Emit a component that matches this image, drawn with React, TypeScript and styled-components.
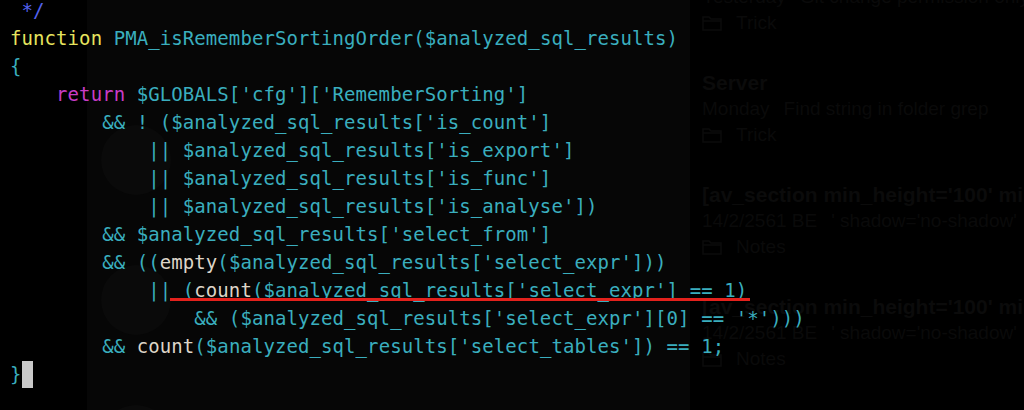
import React from "react";
import styled, { createGlobalStyle } from "styled-components";

const Global = createGlobalStyle`
  html, body { margin: 0; padding: 0; background: #000; }
  body { width: 1024px; height: 410px; overflow: hidden; }
`;

const Screen = styled.div`
  position: relative;
  width: 1024px;
  height: 410px;
  overflow: hidden;
  background: #000;
`;

/* faint page visible through the translucent terminal */
const Backdrop = styled.div`
  position: absolute;
  inset: 0;
  display: grid;
  grid-template-columns: 87px 603px 1fr;
  z-index: 0;
`;

const Sidebar = styled.div`
  background: #000;
`;

const Middle = styled.div`
  background: #060606;
  display: flex;
  flex-direction: column;
  gap: 70px;
  padding: 125px 0 0 14px;
`;

const Avatar = styled.div`
  width: 70px;
  height: 70px;
  border-radius: 50%;
  background: #0a0a0a;
`;

const NotesList = styled.div`
  background: #000;
  display: flex;
  flex-direction: column;
  gap: 34px;
  padding: 0 0 0 12px;
  margin-top: -42px;
  font-family: "Liberation Sans", Arial, sans-serif;
  color: #0a0a0a;
  white-space: nowrap;
`;

const Note = styled.div`
  display: flex;
  flex-direction: column;
`;

const NoteTitle = styled.div`
  font-size: 21px;
  font-weight: 700;
  line-height: 26px;
  color: #0b0b0b;
`;

const NoteRow = styled.div`
  display: flex;
  align-items: center;
  gap: 14px;
  font-size: 19px;
  line-height: 26px;
`;

const FolderIcon = styled.svg`
  width: 20px;
  height: 16px;
  flex: none;
`;

const Folder = () => (
  <FolderIcon viewBox="0 0 20 16">
    <path d="M1 2h6l2 2h10v11H1z M1 6h18" fill="none" stroke="#0b0b0b" strokeWidth="1.5" />
  </FolderIcon>
);

const Terminal = styled.pre`
  position: relative;
  z-index: 1;
  margin: -4px 0 0 0;
  padding: 0 0 0 10px;
  font-family: "DejaVu Sans Mono", "Liberation Mono", monospace;
  font-size: 19px;
  line-height: 28px;
  letter-spacing: 0.08px;
  color: #3aaebe;
  white-space: pre;
`;

const Line = styled.div`
  height: 28px;
`;

type Tone = "comment" | "keyword" | "ret" | "builtin";
const colors: Record<Tone, string> = {
  comment: "#5362ee",
  keyword: "#e6e45e",
  ret: "#c83cc6",
  builtin: "#ddd5c8",
};

const Tok = styled.span<{ $tone: Tone }>`
  color: ${(p) => colors[p.$tone]};
`;

const Marked = styled.span`
  position: relative;
  &::after {
    content: "";
    position: absolute;
    left: -1px;
    right: -3px;
    bottom: 0;
    height: 3px;
    background: #e3211c;
  }
`;

const Cursor = styled.span`
  display: inline-block;
  width: 11px;
  height: 27px;
  background: #c9c9c9;
  vertical-align: -7px;
`;

const notes = [
  { title: "Yesterday", date: "Yesterday", text: "Git change permission only", folder: "Trick" },
  { title: "Server", date: "Monday", text: "Find string in folder grep", folder: "Trick" },
  { title: "[av_section min_height='100' min_height_px", date: "14/2/2561 BE", text: "' shadow='no-shadow'", folder: "Notes" },
  { title: "[av_section min_height='100' min_height_px", date: "14/2/2561 BE", text: "' shadow='no-shadow'", folder: "Notes" },
];

export default function App() {
  return (
    <Screen>
      <Global />
      <Backdrop>
        <Sidebar />
        <Middle>
          <Avatar />
          <Avatar />
          <Avatar />
        </Middle>
        <NotesList>
          {notes.map((n, i) => (
            <Note key={i}>
              <NoteTitle>{n.title}</NoteTitle>
              <NoteRow>
                <span>{n.date}</span>
                <span>{n.text}</span>
              </NoteRow>
              <NoteRow>
                <Folder />
                <span>{n.folder}</span>
              </NoteRow>
            </Note>
          ))}
        </NotesList>
      </Backdrop>
      <Terminal>
        <Line>
          {" "}
          <Tok $tone="comment">*/</Tok>
        </Line>
        <Line>
          <Tok $tone="keyword">function</Tok> PMA_isRememberSortingOrder($analyzed_sql_results)
        </Line>
        <Line>{"{"}</Line>
        <Line>
          {"    "}
          <Tok $tone="ret">return</Tok> $GLOBALS['cfg']['RememberSorting']
        </Line>
        <Line>{"        && ! ($analyzed_sql_results['is_count']"}</Line>
        <Line>{"            || $analyzed_sql_results['is_export']"}</Line>
        <Line>{"            || $analyzed_sql_results['is_func']"}</Line>
        <Line>{"            || $analyzed_sql_results['is_analyse'])"}</Line>
        <Line>{"        && $analyzed_sql_results['select_from']"}</Line>
        <Line>
          {"        && (("}
          <Tok $tone="builtin">empty</Tok>
          {"($analyzed_sql_results['select_expr']))"}
        </Line>
        <Line>
          {"            ||"}
          <Marked>
            {" ("}
            <Tok $tone="builtin">count</Tok>
            {"($analyzed_sql_results['select_expr'] == 1)"}
          </Marked>
        </Line>
        <Line>{"                && ($analyzed_sql_results['select_expr'][0] == '*')))"}</Line>
        <Line>
          {"        && "}
          <Tok $tone="builtin">count</Tok>
          {"($analyzed_sql_results['select_tables']) == 1;"}
        </Line>
        <Line>
          {"}"}
          <Cursor />
        </Line>
      </Terminal>
    </Screen>
  );
}
